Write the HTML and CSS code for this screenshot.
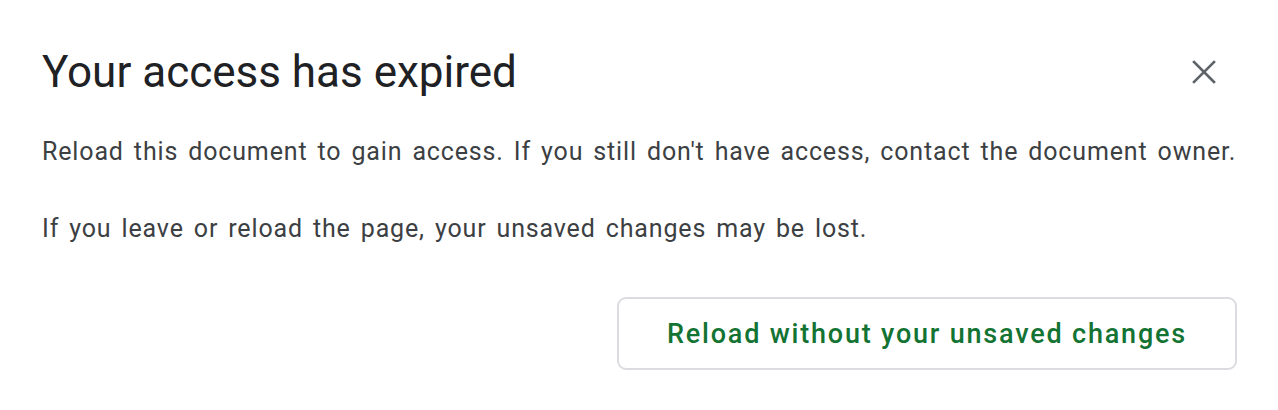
FILE: index.html
```html
<!DOCTYPE html>
<html>
<head>
<meta charset="utf-8">
<link rel="stylesheet" href="styles.css">
</head>
<body>
<div class="dialog">
  <div class="header">
    <h1 class="title">Your access has expired</h1>
    <button class="close" aria-label="Close">
      <svg width="24" height="24" viewBox="0 0 24 24"><path d="M2 2 L22 22 M22 2 L2 22" stroke="#5f6368" stroke-width="2.6" stroke-linecap="square" fill="none"/></svg>
    </button>
  </div>
  <p class="text first">Reload this document to gain access. If you still don't have access, contact the document owner.</p>
  <p class="text second">If you leave or reload the page, your unsaved changes may be lost.</p>
  <div class="actions">
    <button class="reload">Reload without your unsaved changes</button>
  </div>
</div>
</body>
</html>
```
FILE: styles.css
```css
html, body {
  margin: 0;
  padding: 0;
  background: #ffffff;
}
.dialog {
  padding: 46px 41px 0 42px;
  font-family: Roboto, "Liberation Sans", sans-serif;
}
.header {
  display: flex;
  justify-content: space-between;
  align-items: center;
}
.title {
  margin: 0;
  font-family: Roboto, "Liberation Sans", sans-serif;
  font-weight: 400;
  font-size: 44px;
  line-height: 52px;
  color: #202124;
}
.close {
  border: 0;
  background: transparent;
  padding: 0;
  margin-right: 21px;
  width: 24px;
  height: 24px;
  display: flex;
}
.text {
  margin: 0;
  font-size: 25px;
  line-height: 32px;
  letter-spacing: 0.85px;
  word-spacing: 3px;
  color: #3c4043;
  white-space: nowrap;
}
.text.first {
  margin-top: 38px;
  margin-bottom: 45px;
}
.actions {
  display: flex;
  justify-content: flex-end;
  margin-top: 52px;
}
.reload {
  width: 620px;
  height: 73px;
  border: 2px solid #dadce0;
  border-radius: 9px;
  background: #fff;
  color: #137333;
  font-family: Roboto, "Liberation Sans", sans-serif;
  font-weight: 500;
  font-size: 27px;
  letter-spacing: 1.8px;
  padding: 0;
}
```
